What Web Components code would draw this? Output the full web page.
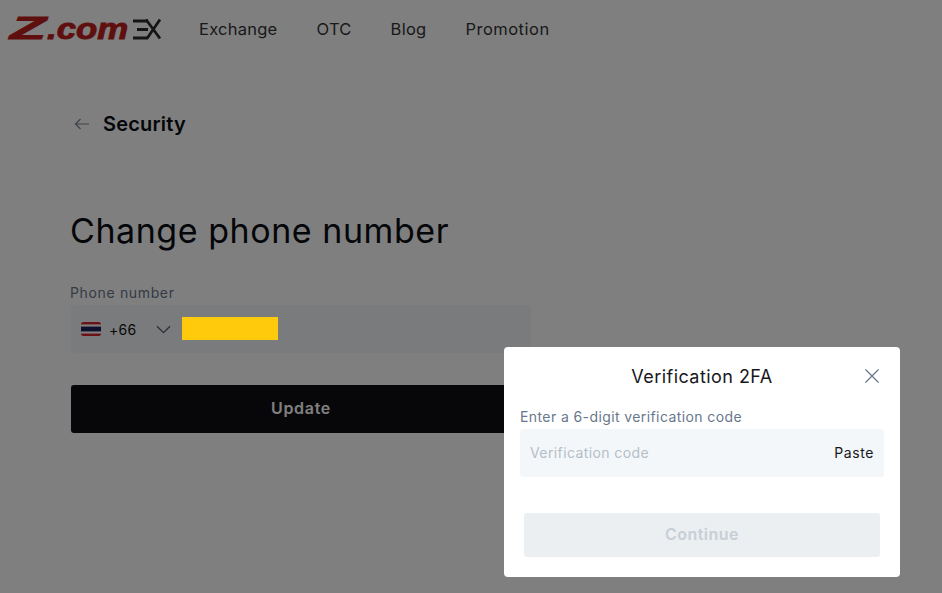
<!DOCTYPE html>
<html lang="en">
<head>
<meta charset="utf-8">
<title>Change phone number</title>
<style>
  html, body { margin: 0; height: 100%; }
  body { background: #fff; font-family: "Inter", "Noto Sans", sans-serif; overflow: hidden; }
</style>
</head>
<body>
<security-page></security-page>

<script>
const logoTemplate = document.createElement("template");
logoTemplate.innerHTML = `
  <style>
    :host { display: flex; align-items: center; width: 162px; height: 26px; position: relative; }
    .word { display: flex; align-items: baseline; margin-left: 10px; width: 121px; white-space: nowrap; color: #c01e1e; font: italic 700 29px/26px "Liberation Sans", sans-serif; -webkit-text-stroke: 0.9px #c01e1e; }
    .z { display: inline-block; width: 37px; font-size: 31px; transform: scaleX(1.9); transform-origin: left bottom; }
    .rest { display: inline-block; transform: scaleX(1.2); transform-origin: left bottom; }
    svg { display: block; position: absolute; left: 131px; top: 2px; }
  </style>
  <span class="word"><span class="z">Z</span><span class="rest">.com</span></span>
  <svg width="31" height="22" viewBox="0 0 31 22">
    <path d="M2 3h15M6 11.500h11M2 20h15" stroke="#2a2a2c" stroke-width="3.200" fill="none"/>
    <path d="M15 1.500l14 19M29 1.500L16 20.500" stroke="#2a2a2c" stroke-width="2.800" fill="none"/>
  </svg>
`;
class ZcomLogo extends HTMLElement {
  constructor() {
    super();
    this.attachShadow({ mode: "open" });
    this.shadowRoot.append(logoTemplate.content.cloneNode(true));
  }
}
customElements.define("zcom-logo", ZcomLogo);

const navTemplate = document.createElement("template");
navTemplate.innerHTML = `
  <style>
    :host { display: flex; align-items: center; height: 58px; }
    nav { display: flex; gap: 39px; margin-left: 37px; }
    a { color: #333; font-size: 16.5px; letter-spacing: 0.25px; text-decoration: none; }
    a:last-child { letter-spacing: 0.5px; }
  </style>
  <zcom-logo></zcom-logo>
  <nav>
    <a href="#">Exchange</a>
    <a href="#">OTC</a>
    <a href="#">Blog</a>
    <a href="#">Promotion</a>
  </nav>
`;
class TopNav extends HTMLElement {
  constructor() {
    super();
    this.attachShadow({ mode: "open" });
    this.shadowRoot.append(navTemplate.content.cloneNode(true));
  }
}
customElements.define("top-nav", TopNav);

const phoneTemplate = document.createElement("template");
phoneTemplate.innerHTML = `
  <style>
    :host { display: block; position: relative; width: 460px; }
    label { display: block; margin-left: -1px; font-size: 14px; line-height: 24px; color: #68788c; letter-spacing: 0.65px; }
    .field {
      display: flex; align-items: center;
      height: 48px; padding-left: 10px;
      background: #f4f7fa; border-radius: 3px;
      font-size: 14px; color: #111;
    }
    .flag { display: block; width: 20px; height: 14px; margin-right: 8px; }
    .code { width: 47px; letter-spacing: 0.3px; }
    .chev { display: block; }
    .mask { position: absolute; z-index: 2; left: 111px; top: 36px; width: 96px; height: 23px; background: #ffca0b; }
  </style>
  <label>Phone number</label>
  <div class="field">
    <svg class="flag" viewBox="0 0 20 14">
      <defs><clipPath id="r"><rect width="20" height="14" rx="2.5"/></clipPath></defs>
      <g clip-path="url(#r)">
        <rect width="20" height="14" fill="#d8232a"/>
        <rect y="2.4" width="20" height="9.2" fill="#fff"/>
        <rect y="4.6" width="20" height="4.8" fill="#1f1f5c"/>
      </g>
    </svg>
    <span class="code">+66</span>
    <svg class="chev" width="15" height="9" viewBox="0 0 15 9"><path d="M1 1.2l6.5 6.5L14 1.2" fill="none" stroke="#555e6b" stroke-width="1.3"/></svg>
  </div>
  <div class="mask"></div>
`;
class PhoneField extends HTMLElement {
  constructor() {
    super();
    this.attachShadow({ mode: "open" });
    this.shadowRoot.append(phoneTemplate.content.cloneNode(true));
  }
}
customElements.define("phone-field", PhoneField);

const modalTemplate = document.createElement("template");
modalTemplate.innerHTML = `
  <style>
    :host {
      display: block; position: absolute; z-index: 2; left: 504px; top: 347px;
      width: 396px; height: 230px; box-sizing: border-box;
      padding: 16px; background: #fff; border-radius: 4px;
    }
    header { display: flex; justify-content: center; align-items: center; height: 26px; position: relative; }
    h2 { margin: 0; font-size: 18px; font-weight: 400; color: #16181c; letter-spacing: 0.45px; }
    .close { position: absolute; right: 4px; top: 5px; display: block; }
    label { display: block; margin-top: 18px; font-size: 14px; line-height: 20px; color: #68788c; letter-spacing: 0.4px; }
    .field {
      display: flex; justify-content: space-between; align-items: center;
      height: 48px; margin-top: 2px; padding: 0 10px 1px;
      box-sizing: border-box;
      background: #f4f7fa; border-radius: 3px; font-size: 14px;
    }
    .hint { color: #b4bec9; letter-spacing: 0.4px; }
    .paste { color: #16181c; letter-spacing: 0.6px; }
    button {
      display: block; width: 356px; height: 44px; margin: 36px 0 0 4px; padding: 0 0 2px;
      border: 0; border-radius: 3px; background: #ebeff2; color: #c8ced6;
      font: 600 16px "Inter", sans-serif; letter-spacing: 0.45px;
    }
  </style>
  <header>
    <h2>Verification 2FA</h2>
    <svg class="close" width="16" height="16" viewBox="0 0 16 16"><path d="M1.5 1.5l13 13M14.5 1.5l-13 13" stroke="#68788c" stroke-width="1.3" fill="none"/></svg>
  </header>
  <label>Enter a 6-digit verification code</label>
  <div class="field"><span class="hint">Verification code</span><span class="paste">Paste</span></div>
  <button disabled>Continue</button>
`;
class VerifyModal extends HTMLElement {
  constructor() {
    super();
    this.attachShadow({ mode: "open" });
    this.shadowRoot.append(modalTemplate.content.cloneNode(true));
  }
}
customElements.define("verify-modal", VerifyModal);

const pageTemplate = document.createElement("template");
pageTemplate.innerHTML = `
  <style>
    :host { display: block; position: relative; width: 942px; height: 593px; overflow: hidden; background: #fff; }
    main { padding: 52px 0 0 71px; }
    .back { display: flex; align-items: center; gap: 13px; height: 28px; }
    .back svg { display: block; margin-left: 3px; }
    .back span { font-size: 20px; font-weight: 600; color: #0b0d12; letter-spacing: 0.2px; }
    h1 { margin: 71px 0 0 -1px; font-size: 34px; line-height: 44px; font-weight: 400; color: #0b0d12; letter-spacing: 0.55px; }
    phone-field { margin-top: 28px; }
    .update {
      display: block; width: 460px; height: 48px; margin-top: 32px; padding: 0 0 2px;
      border: 0; border-radius: 3px; background: #0e0e12; color: #fff;
      font: 600 16px "Inter", sans-serif; letter-spacing: 0.7px;
    }
    .scrim { position: absolute; z-index: 1; inset: 0; background: rgba(0,0,0,.5); }
  </style>
  <top-nav></top-nav>
  <main>
    <div class="back">
      <svg width="16" height="12" viewBox="0 0 16 12"><path d="M15 6H1.500M6.500 1L1.500 6l5 5" fill="none" stroke="#7a8494" stroke-width="1.200"/></svg>
      <span>Security</span>
    </div>
    <h1>Change phone number</h1>
    <phone-field></phone-field>
    <button class="update">Update</button>
  </main>
  <div class="scrim"></div>
  <verify-modal></verify-modal>
`;
class SecurityPage extends HTMLElement {
  constructor() {
    super();
    this.attachShadow({ mode: "open" });
    this.shadowRoot.append(pageTemplate.content.cloneNode(true));
  }
}
customElements.define("security-page", SecurityPage);
</script>
</body>
</html>
